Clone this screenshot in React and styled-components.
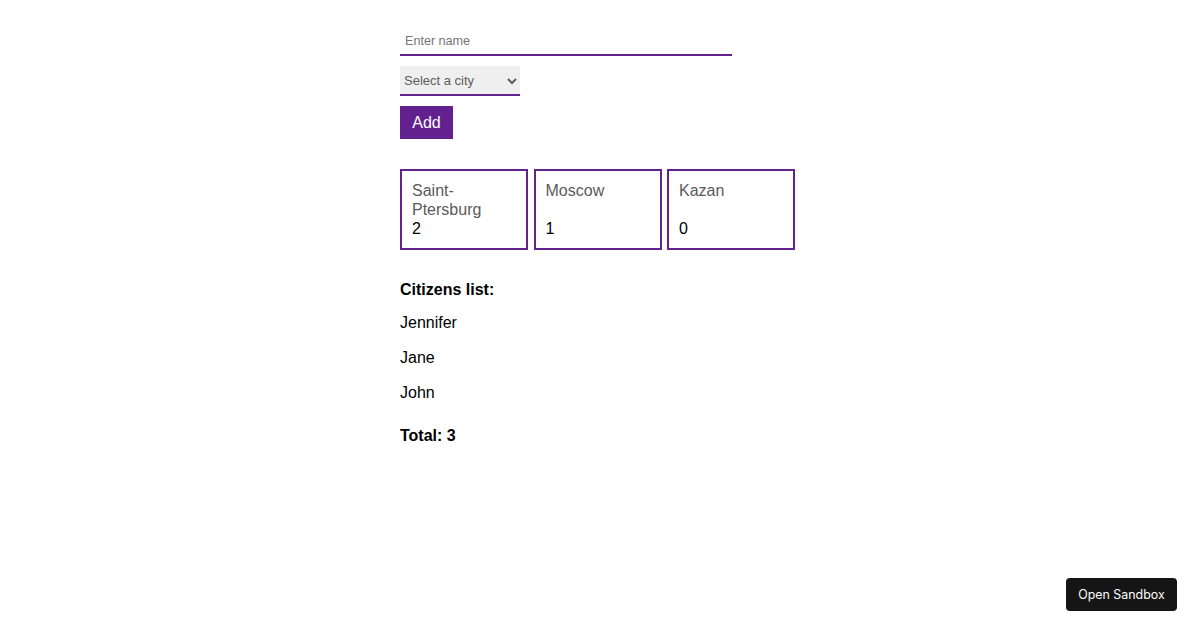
import React from "react";
import styled, { createGlobalStyle } from "styled-components";

const Global = createGlobalStyle`
  html, body { margin: 0; padding: 0; background: #fff; }
  body { font-family: "Liberation Sans", Arial, sans-serif; color: #000; }
`;

const Page = styled.div`
  width: 400px;
  margin: 0 auto;
  padding-top: 27px;
  display: flex;
  flex-direction: column;
  align-items: flex-start;
`;

const NameInput = styled.input`
  box-sizing: border-box;
  width: 332px;
  height: 29px;
  border: none;
  border-bottom: 2px solid #62238e;
  padding: 0 5px;
  font-family: "Liberation Sans", Arial, sans-serif;
  font-size: 12.6px;
  outline: none;
  &::placeholder { color: #757575; }
`;

const CitySelect = styled.select`
  box-sizing: border-box;
  margin-top: 10px;
  width: 120px;
  height: 30px;
  border: none;
  border-bottom: 2px solid #62238e;
  background: #efefef;
  color: #5c5c5c;
  font-family: "Liberation Sans", Arial, sans-serif;
  font-size: 13px;
  padding: 0;
  outline: none;
`;

const AddButton = styled.button`
  margin-top: 10px;
  width: 53px;
  height: 33px;
  padding: 0;
  border: none;
  background: #62218e;
  color: #fff;
  font-family: "Liberation Sans", Arial, sans-serif;
  font-size: 16px;
`;

const Cards = styled.div`
  margin-top: 30px;
  display: flex;
  gap: 5.5px;
`;

const Card = styled.div`
  box-sizing: border-box;
  width: 128px;
  height: 81px;
  border: 2px solid #62238e;
  padding: 10px;
  display: flex;
  flex-direction: column;
  justify-content: space-between;
  font-size: 16px;
  line-height: 19px;
`;

const CardTitle = styled.div`
  color: #5a5a5a;
`;

const CardCount = styled.div`
  color: #000;
`;

const ListTitle = styled.div`
  margin-top: 30px;
  font-weight: bold;
  font-size: 16px;
  line-height: 19px;
`;

const Citizen = styled.div`
  margin-top: ${(p) => p.$gap}px;
  font-size: 16px;
  line-height: 19px;
`;

const Total = styled.div`
  margin-top: 24px;
  font-weight: bold;
  font-size: 16px;
  line-height: 19px;
`;

const SandboxButton = styled.button`
  position: fixed;
  right: 23px;
  bottom: 19px;
  width: 111px;
  height: 33px;
  padding: 0;
  border: none;
  border-radius: 4px;
  background: #151515;
  color: #fff;
  font-family: Inter, "Liberation Sans", sans-serif;
  font-size: 12.4px;
`;

const cities = [
  { name: "Saint-Ptersburg", count: 2 },
  { name: "Moscow", count: 1 },
  { name: "Kazan", count: 0 },
];

const citizens = ["Jennifer", "Jane", "John"];

export default function App() {
  return (
    <>
      <Global />
      <Page>
        <NameInput placeholder="Enter name" />
        <CitySelect defaultValue="">
          <option value="" disabled>Select a city</option>
          {cities.map((c) => (
            <option key={c.name}>{c.name}</option>
          ))}
        </CitySelect>
        <AddButton>Add</AddButton>
        <Cards>
          {cities.map((c) => (
            <Card key={c.name}>
              <CardTitle>{c.name}</CardTitle>
              <CardCount>{c.count}</CardCount>
            </Card>
          ))}
        </Cards>
        <ListTitle>Citizens list:</ListTitle>
        {citizens.map((n, i) => (
          <Citizen key={n} $gap={i === 0 ? 14 : 16}>{n}</Citizen>
        ))}
        <Total>Total: 3</Total>
      </Page>
      <SandboxButton>Open Sandbox</SandboxButton>
    </>
  );
}
